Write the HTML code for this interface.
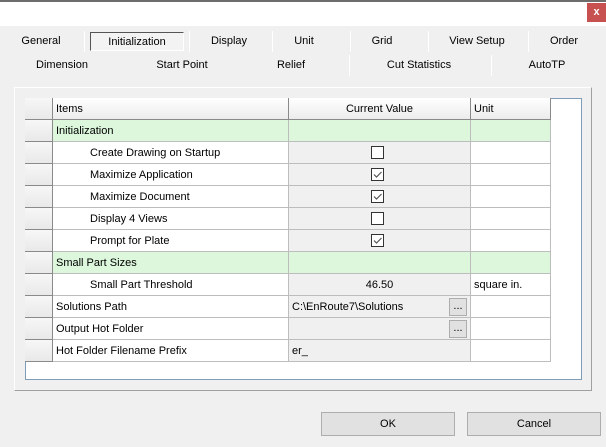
<!DOCTYPE html>
<html><head><style>
*{margin:0;padding:0;box-sizing:border-box}
body{width:606px;height:447px;background:#f0f0f0;font-family:"Liberation Sans",sans-serif;font-size:11px;color:#000;position:relative;overflow:hidden}
.a{position:absolute}
.title{left:0;top:0;width:606px;height:26px;background:#fff;border-top:2px solid #6d6d6d}
.close{left:587px;top:3px;width:19px;height:19px;background:#c75050;color:#fff;font-weight:bold;font-size:11px;text-align:center;line-height:18px}
.t{position:absolute;font-size:11px;transform:translateX(-50%);white-space:nowrap}
.sep{position:absolute;width:1px;background:#a0a0a0;border-right:1px solid #fff}
.cell{position:absolute;border-right:1px solid #bdbdbd;border-bottom:1px solid #bdbdbd;padding-left:3px;line-height:23px;white-space:nowrap;overflow:hidden}
.rh{position:absolute;left:25px;width:28px;height:22px;background:linear-gradient(#f7f7f7,#e9e9e9);border-right:1px solid #8a8a8a;border-bottom:1px solid #8a8a8a}
.cb{position:absolute;width:13px;height:13px;border:1px solid #333;background:#fff}
.btn{position:absolute;border:1px solid #adadad;background:#e1e1e1;text-align:center;line-height:23px}
.dots{position:absolute;width:18px;height:18px;border:1px solid #adadad;background:#e1e1e1;text-align:center;line-height:14px;font-size:11px}
</style></head><body>
<div class="a title"></div>
<div class="a close">x</div>

<div class="t" style="left:41px;top:35px">General</div>
<div class="a" style="left:90px;top:32px;width:94px;height:19px;border:1px solid #555;border-right-color:#fff;border-bottom-color:#fff;background:#f3f3f3"></div>
<div class="t" style="left:137px;top:36px">Initialization</div>
<div class="t" style="left:229px;top:35px">Display</div>
<div class="t" style="left:304px;top:35px">Unit</div>
<div class="t" style="left:382px;top:35px">Grid</div>
<div class="t" style="left:477px;top:35px">View Setup</div>
<div class="t" style="left:564px;top:35px">Order</div>
<div class="sep" style="left:84px;top:31px;height:21px"></div>
<div class="sep" style="left:189px;top:31px;height:21px"></div>
<div class="sep" style="left:272px;top:31px;height:21px"></div>
<div class="sep" style="left:350px;top:31px;height:21px"></div>
<div class="sep" style="left:428px;top:31px;height:21px"></div>
<div class="sep" style="left:528px;top:31px;height:21px"></div>
<div class="t" style="left:62px;top:59px">Dimension</div>
<div class="t" style="left:182px;top:59px">Start Point</div>
<div class="t" style="left:291px;top:59px">Relief</div>
<div class="t" style="left:419px;top:59px">Cut Statistics</div>
<div class="t" style="left:547px;top:59px">AutoTP</div>
<div class="sep" style="left:349px;top:55px;height:21px"></div>
<div class="sep" style="left:491px;top:55px;height:21px"></div>

<div class="a" style="left:14px;top:87px;width:578px;height:304px;border-top:1px solid #fff;border-left:1px solid #fff;border-right:1px solid #a0a0a0;border-bottom:1px solid #a0a0a0"></div>
<div class="a" style="left:25px;top:98px;height:282px;width:557px;border:1px solid #7f9db9;background:#fff"></div>

<div class="rh" style="top:98px"></div>
<div class="cell" style="left:53px;top:98px;width:236px;height:22px;background:linear-gradient(#fff,#ececec);border-color:#8a8a8a">Items</div>
<div class="cell" style="left:289px;top:98px;width:182px;height:22px;background:linear-gradient(#fff,#ececec);border-color:#8a8a8a;text-align:center;padding:0">Current Value</div>
<div class="cell" style="left:471px;top:98px;width:80px;height:22px;background:linear-gradient(#fff,#ececec);border-color:#8a8a8a">Unit</div>

<div id="rows"></div>
<script>
var rows=[
["Initialization",1],["Create Drawing on Startup",0,"cb0"],["Maximize Application",0,"cb1"],["Maximize Document",0,"cb1"],["Display 4 Views",0,"cb0"],["Prompt for Plate",0,"cb1"],
["Small Part Sizes",1],["Small Part Threshold",0,"46.50","square in."],["Solutions Path",2,"C:\\EnRoute7\\Solutions","",1],["Output Hot Folder",2,"","",1],["Hot Folder Filename Prefix",2,"er_"]];
var h="";
rows.forEach(function(r,i){
 var y=120+i*22;
 var g=r[1]==1;
 h+='<div class="rh" style="top:'+y+'px"></div>';
 h+='<div class="cell" style="left:53px;top:'+y+'px;width:236px;height:22px;background:'+(g?'#dcf7dc':'#fff')+';padding-left:'+(r[1]==0?37:3)+'px">'+r[0]+'</div>';
 var v=r[2]||"",c="";
 if(v=="cb0"||v=="cb1"){c='<div class="cb" style="left:82px;top:4px">'+(v=="cb1"?'<svg width="11" height="11" style="position:absolute;left:0;top:0"><path d="M2 5.5 L4.5 8 L9.5 3" stroke="#555" stroke-width="1.2" fill="none"/></svg>':'')+'</div>';v="";}
 var al=(r[2]=="46.50")?"text-align:center;padding:0;":"";
 h+='<div class="cell" style="left:289px;top:'+y+'px;width:182px;height:22px;'+al+'background:'+(g?'#dcf7dc':'#f0f0f0')+'">'+v+c+(r[4]?'<div class="dots" style="left:160px;top:2px">...</div>':'')+'</div>';
 h+='<div class="cell" style="left:471px;top:'+y+'px;width:80px;height:22px;background:'+(g?'#dcf7dc':'#fff')+'">'+(r[3]||"")+'</div>';
});
document.getElementById("rows").innerHTML=h;
</script>

<div class="btn" style="left:321px;top:412px;width:134px;height:24px">OK</div>
<div class="btn" style="left:467px;top:412px;width:134px;height:24px">Cancel</div>
</body></html>
